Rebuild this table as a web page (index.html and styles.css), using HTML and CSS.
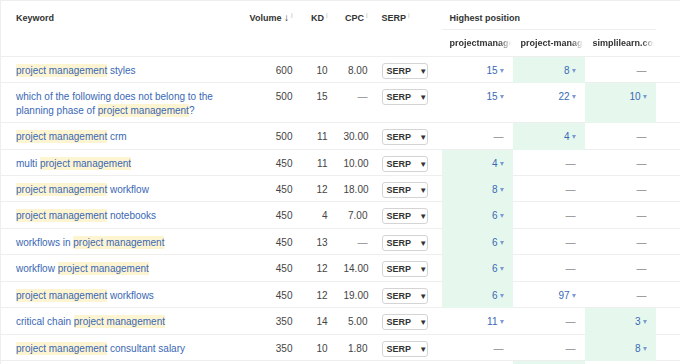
FILE: index.html
```html
<!DOCTYPE html>
<html lang="en">
<head>
    <meta charset="UTF-8">
    <meta name="viewport" content="width=device-width, initial-scale=1.0">
    <title>Keywords</title>
    <link rel="stylesheet" href="styles.css">
</head>
<body>
    <table class="kw-table">
        <colgroup>
            <col class="c-kw">
            <col class="c-vol">
            <col class="c-kd">
            <col class="c-cpc">
            <col class="c-serp">
            <col class="c-pos">
            <col class="c-pos2">
            <col class="c-pos">
            <col class="c-rest">
        </colgroup>
        <thead>
            <tr>
                <th rowspan="2" class="h-kw">Keyword</th>
                <th rowspan="2" class="num">Volume <span class="sort">&#8595;</span><sup class="info">i</sup></th>
                <th rowspan="2" class="num">KD<sup class="info">i</sup></th>
                <th rowspan="2" class="num">CPC<sup class="info">i</sup></th>
                <th rowspan="2" class="h-serp">SERP<sup class="info">i</sup></th>
                <th colspan="3" class="h-pos">Highest position</th>
                <th rowspan="2"></th>
            </tr>
            <tr>
                <th class="h-site"><span>projectmanagement.com</span></th>
                <th class="h-site"><span>project-management.com</span></th>
                <th class="h-site"><span>simplilearn.com</span></th>
            </tr>
        </thead>
        <tbody>
            <tr>
                <td class="kw"><a href="#"><mark>project management</mark> styles</a></td>
                <td class="num">600</td><td class="num">10</td><td class="num">8.00</td>
                <td class="serp"><button>SERP <i>&#9660;</i></button></td>
                <td class="pos"><a href="#">15</a><b></b></td>
                <td class="pos best"><a href="#">8</a><b></b></td>
                <td class="pos none">&mdash;</td>
                <td></td>
            </tr>
            <tr>
                <td class="kw"><a href="#">which of the following does not belong to the planning phase of <mark>project management</mark>?</a></td>
                <td class="num">500</td><td class="num">15</td><td class="num none">&mdash;</td>
                <td class="serp"><button>SERP <i>&#9660;</i></button></td>
                <td class="pos"><a href="#">15</a><b></b></td>
                <td class="pos"><a href="#">22</a><b></b></td>
                <td class="pos best"><a href="#">10</a><b></b></td>
                <td></td>
            </tr>
            <tr>
                <td class="kw"><a href="#"><mark>project management</mark> crm</a></td>
                <td class="num">500</td><td class="num">11</td><td class="num">30.00</td>
                <td class="serp"><button>SERP <i>&#9660;</i></button></td>
                <td class="pos none">&mdash;</td>
                <td class="pos best"><a href="#">4</a><b></b></td>
                <td class="pos none">&mdash;</td>
                <td></td>
            </tr>
            <tr>
                <td class="kw"><a href="#">multi <mark>project management</mark></a></td>
                <td class="num">450</td><td class="num">11</td><td class="num">10.00</td>
                <td class="serp"><button>SERP <i>&#9660;</i></button></td>
                <td class="pos best"><a href="#">4</a><b></b></td>
                <td class="pos none">&mdash;</td>
                <td class="pos none">&mdash;</td>
                <td></td>
            </tr>
            <tr>
                <td class="kw"><a href="#"><mark>project management</mark> workflow</a></td>
                <td class="num">450</td><td class="num">12</td><td class="num">18.00</td>
                <td class="serp"><button>SERP <i>&#9660;</i></button></td>
                <td class="pos best"><a href="#">8</a><b></b></td>
                <td class="pos none">&mdash;</td>
                <td class="pos none">&mdash;</td>
                <td></td>
            </tr>
            <tr>
                <td class="kw"><a href="#"><mark>project management</mark> notebooks</a></td>
                <td class="num">450</td><td class="num">4</td><td class="num">7.00</td>
                <td class="serp"><button>SERP <i>&#9660;</i></button></td>
                <td class="pos best"><a href="#">6</a><b></b></td>
                <td class="pos none">&mdash;</td>
                <td class="pos none">&mdash;</td>
                <td></td>
            </tr>
            <tr>
                <td class="kw"><a href="#">workflows in <mark>project management</mark></a></td>
                <td class="num">450</td><td class="num">13</td><td class="num none">&mdash;</td>
                <td class="serp"><button>SERP <i>&#9660;</i></button></td>
                <td class="pos best"><a href="#">6</a><b></b></td>
                <td class="pos none">&mdash;</td>
                <td class="pos none">&mdash;</td>
                <td></td>
            </tr>
            <tr>
                <td class="kw"><a href="#">workflow <mark>project management</mark></a></td>
                <td class="num">450</td><td class="num">12</td><td class="num">14.00</td>
                <td class="serp"><button>SERP <i>&#9660;</i></button></td>
                <td class="pos best"><a href="#">6</a><b></b></td>
                <td class="pos none">&mdash;</td>
                <td class="pos none">&mdash;</td>
                <td></td>
            </tr>
            <tr>
                <td class="kw"><a href="#"><mark>project management</mark> workflows</a></td>
                <td class="num">450</td><td class="num">12</td><td class="num">19.00</td>
                <td class="serp"><button>SERP <i>&#9660;</i></button></td>
                <td class="pos best"><a href="#">6</a><b></b></td>
                <td class="pos"><a href="#">97</a><b></b></td>
                <td class="pos none">&mdash;</td>
                <td></td>
            </tr>
            <tr>
                <td class="kw"><a href="#">critical chain <mark>project management</mark></a></td>
                <td class="num">350</td><td class="num">14</td><td class="num">5.00</td>
                <td class="serp"><button>SERP <i>&#9660;</i></button></td>
                <td class="pos"><a href="#">11</a><b></b></td>
                <td class="pos none">&mdash;</td>
                <td class="pos best"><a href="#">3</a><b></b></td>
                <td></td>
            </tr>
            <tr>
                <td class="kw"><a href="#"><mark>project management</mark> consultant salary</a></td>
                <td class="num">350</td><td class="num">10</td><td class="num">1.80</td>
                <td class="serp"><button>SERP <i>&#9660;</i></button></td>
                <td class="pos none">&mdash;</td>
                <td class="pos none">&mdash;</td>
                <td class="pos best"><a href="#">8</a><b></b></td>
                <td></td>
            </tr>
            <tr>
                <td class="kw"><a href="#"><mark>project management</mark> skills</a></td>
                <td class="num">300</td><td class="num">18</td><td class="num">4.50</td>
                <td class="serp"><button>SERP <i>&#9660;</i></button></td>
                <td class="pos none">&mdash;</td>
                <td class="pos best"><a href="#">5</a><b></b></td>
                <td class="pos none">&mdash;</td>
                <td></td>
            </tr>
        </tbody>
    </table>
</body>
</html>
```

FILE: styles.css
```css
body {
    margin: 0;
    font-family: "Liberation Sans", Arial, sans-serif;
    font-size: 10px;
    color: #444;
    background: #fff;
}

.kw-table {
    width: 680px;
    table-layout: fixed;
    border-collapse: collapse;
    border-top: 1px solid #eee;
    border-left: 1px solid #eee;
}

.c-kw { width: 240px; }
.c-vol { width: 60px; }
.c-kd { width: 35px; }
.c-cpc { width: 40px; }
.c-serp { width: 66px; }
.c-pos { width: 71px; }
.c-pos2 { width: 72px; }
.c-rest { width: 25px; }

/* header */
th {
    font-size: 9px;
    font-weight: bold;
    color: #333;
    text-align: left;
    vertical-align: top;
    line-height: 12px;
    padding: 11px 8px 5px;
    border-bottom: 1px solid #eee;
    white-space: nowrap;
}

th.h-kw {
    padding-left: 15px;
}

th.num {
    text-align: right;
}

th.h-serp {
    padding-left: 6px;
}

.sort {
    font-size: 10px;
    font-weight: bold;
    color: #333;
}

.info {
    font-size: 7px;
    font-weight: normal;
    color: #bbb;
    vertical-align: top;
    line-height: 8px;
    margin-left: 2px;
}

th.h-site {
    vertical-align: middle;
    padding: 7px 2px 7px 8px;
    overflow: hidden;
}

th.h-site span {
    display: block;
    overflow: hidden;
    -webkit-mask-image: linear-gradient(to right, #000 80%, transparent);
    mask-image: linear-gradient(to right, #000 80%, transparent);
}

/* body */
td {
    vertical-align: top;
    line-height: 13.33px;
    padding: 7px 8px 5.1px;
    border-bottom: 1px solid #eee;
    white-space: nowrap;
}

td.kw {
    padding-left: 15px;
    padding-right: 12px;
    white-space: normal;
}

a {
    color: #3a68b4;
    text-decoration: none;
}

mark {
    background: #fdf4d2;
    color: inherit;
    padding: 1px 0;
}

td.num {
    text-align: right;
}

.none {
    color: #888;
}

td.serp {
    padding: 6px 0 0 6px;
}

td.serp button {
    display: block;
    width: 46px;
    height: 16px;
    padding: 0 0 0 4px;
    border: 1px solid #d4d4d4;
    border-radius: 3px;
    background: #fff;
    font-family: inherit;
    font-size: 9px;
    font-weight: bold;
    color: #333;
    text-align: left;
    line-height: 14px;
}

td.serp button i {
    font-style: normal;
    font-size: 8px;
    margin-left: 6px;
}

td.pos {
    text-align: right;
    padding-right: 9px;
}

td.pos b {
    display: inline-block;
    width: 0;
    height: 0;
    margin-left: 2px;
    border-left: 2.5px solid transparent;
    border-right: 2.5px solid transparent;
    border-top: 4px solid #7d9ad3;
    vertical-align: 1px;
}

td.best {
    background: #e6f8ed;
    border-bottom-color: #e6f8ed;
}
```
